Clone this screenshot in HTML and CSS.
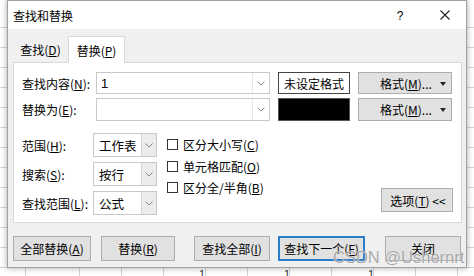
FILE: index.html
```html
<!DOCTYPE html>
<html lang="zh-CN">
<head>
<meta charset="utf-8">
<title>查找和替换</title>
<link rel="stylesheet" href="styles.css">
</head>
<body>
<div class="desk">
  <span class="cell-num n1">1</span>
  <span class="cell-num n2">1</span>
  <span class="cell-num n3">1</span>
  <div class="dialog">
    <div class="titlebar">
      <span class="title">查找和替换</span>
      <span class="tb-btn help">?</span>
      <span class="tb-btn close"><svg width="10" height="10" viewBox="0 0 10 10"><path d="M0.5 0.5 L9.5 9.5 M9.5 0.5 L0.5 9.5" stroke="#222" stroke-width="1.1" fill="none"/></svg></span>
    </div>
    <div class="tabs">
      <div class="tab t1">查找(<u>D</u>)</div>
      <div class="tab t2 active">替换(<u>P</u>)</div>
    </div>
    <div class="panel">
      <div class="row">
        <span class="lbl">查找内容(<u>N</u>):</span>
        <div class="combo wide"><span class="val">1</span><span class="drop"><svg width="8" height="5" viewBox="0 0 8 5"><polyline points="0.5,0.5 4,4 7.5,0.5" stroke="#888" fill="none"/></svg></span></div>
        <div class="preview">未设定格式</div>
        <div class="btn fmt"><span>格式(<u>M</u>)...</span><svg class="caret" width="6" height="4" viewBox="0 0 6 4"><polygon points="0,0 6,0 3,4" fill="#222"/></svg></div>
      </div>
      <div class="row r2">
        <span class="lbl">替换为(<u>E</u>):</span>
        <div class="combo wide"><span class="val"></span><span class="drop"><svg width="8" height="5" viewBox="0 0 8 5"><polyline points="0.5,0.5 4,4 7.5,0.5" stroke="#888" fill="none"/></svg></span></div>
        <div class="preview black"></div>
        <div class="btn fmt"><span>格式(<u>M</u>)...</span><svg class="caret" width="6" height="4" viewBox="0 0 6 4"><polygon points="0,0 6,0 3,4" fill="#222"/></svg></div>
      </div>
      <div class="lower">
        <div class="opts">
          <div class="orow">
            <span class="lbl2">范围(<u>H</u>):</span>
            <div class="combo small"><span class="val">工作表</span><span class="drop gray"><svg width="8" height="5" viewBox="0 0 8 5"><polyline points="0.5,0.5 4,4 7.5,0.5" stroke="#888" fill="none"/></svg></span></div>
          </div>
          <div class="orow">
            <span class="lbl2">搜索(<u>S</u>):</span>
            <div class="combo small"><span class="val">按行</span><span class="drop gray"><svg width="8" height="5" viewBox="0 0 8 5"><polyline points="0.5,0.5 4,4 7.5,0.5" stroke="#888" fill="none"/></svg></span></div>
          </div>
          <div class="orow">
            <span class="lbl2">查找范围(<u>L</u>):</span>
            <div class="combo small"><span class="val">公式</span><span class="drop gray"><svg width="8" height="5" viewBox="0 0 8 5"><polyline points="0.5,0.5 4,4 7.5,0.5" stroke="#888" fill="none"/></svg></span></div>
          </div>
        </div>
        <div class="checks">
          <div class="chk"><span class="box"></span>区分大小写(<u>C</u>)</div>
          <div class="chk"><span class="box"></span>单元格匹配(<u>O</u>)</div>
          <div class="chk"><span class="box"></span>区分全/半角(<u>B</u>)</div>
        </div>
        <div class="btn options">选项(<u>T</u>) &lt;&lt;</div>
      </div>
    </div>
    <div class="actions">
      <div class="btn act a1">全部替换(<u>A</u>)</div>
      <div class="btn act a2">替换(<u>R</u>)</div>
      <div class="btn act a3">查找全部(<u>I</u>)</div>
      <div class="btn act a4 primary">查找下一个(<u>F</u>)</div>
      <div class="btn act a5">关闭</div>
    </div>
  </div>
  <div class="wm">CSDN @Ushernrt</div>
</div>
</body>
</html>
```

FILE: styles.css
```css
* { box-sizing: border-box; }
html, body { margin: 0; padding: 0; }
body {
  width: 474px;
  height: 276px;
  overflow: hidden;
  font-family: "Noto Sans CJK SC", "Noto Sans", sans-serif;
  font-size: 12px;
  color: #000;
}
.desk {
  position: relative;
  width: 474px;
  height: 276px;
  padding-left: 7px;
  background-color: #ffffff;
  background-image:
    repeating-linear-gradient(to bottom, transparent 0, transparent 19px, #d4d4d4 19px, #d4d4d4 20px),
    repeating-linear-gradient(to right, transparent 0, transparent 41px, #d4d4d4 41px, #d4d4d4 42px);
  background-position: 0 8px, 38px 0;
}
.cell-num {
  position: absolute;
  top: 268px;
  font-family: "Liberation Sans", sans-serif;
  font-size: 11px;
  line-height: 12px;
  color: #333;
}
.n1 { left: 199px; }
.n2 { left: 284px; }
.n3 { left: 368px; }
.dialog {
  position: relative;
  width: 460px;
  height: 268px;
  background: #f0f0f0;
  border: 1px solid #a0a0a0;
  box-shadow: 0 0 6px rgba(0, 0, 0, 0.35);
  display: flex;
  flex-direction: column;
}
.titlebar {
  height: 28px;
  background: #fff;
  display: flex;
  align-items: center;
  padding-left: 5px;
  padding-right: 6px;
}
.title { flex: 1; font-size: 12px; }
.tb-btn {
  width: 30px;
  height: 28px;
  display: flex;
  align-items: center;
  justify-content: center;
}
.help {
  font-family: "Liberation Sans", sans-serif;
  font-size: 12px;
  margin-right: 15px;
  padding-top: 1px;
}
.tabs {
  display: flex;
  padding-top: 7px;
  padding-left: 5px;
  height: 33px;
}
.tab {
  height: 26px;
  display: flex;
  align-items: center;
  justify-content: center;
  padding-top: 1px;
}
.t1 { width: 55px; }
.t2 { width: 57px; }
.tab.active {
  background: #fff;
  border: 1px solid #d9d9d9;
  border-bottom: none;
  height: 27px;
  position: relative;
  z-index: 1;
}
.panel {
  margin: 0 4px 0 5px;
  height: 161px;
  background: #fff;
  border: 1px solid #d9d9d9;
  padding: 9px 8px 0 8px;
}
.row {
  display: flex;
  align-items: center;
  height: 22px;
}
.row.r2 { margin-top: 4px; height: 23px; }
.lbl { width: 74px; }
.combo {
  display: flex;
  align-items: stretch;
  height: 100%;
  border: 1px solid #c9c9c9;
  background: #fff;
}
.combo.wide { width: 174px; margin-right: 8px; }
.combo .val {
  flex: 1;
  display: flex;
  align-items: center;
  padding-left: 4px;
}
.combo.wide .val { font-family: "Liberation Sans", sans-serif; font-size: 13px; }
.drop {
  width: 17px;
  display: flex;
  align-items: center;
  justify-content: center;
  border-left: 1px solid #e6e6e6;
}
.drop.gray {
  width: 15px;
  background: #ececec;
  border-left: 1px solid #d6d6d6;
}
.preview {
  width: 72px;
  height: 100%;
  margin-right: 8px;
  border: 1px solid #444;
  background: #fff;
  display: flex;
  align-items: center;
  justify-content: center;
}
.preview.black { background: #000; border-color: #555; }
.btn {
  background: #e1e1e1;
  border: 1px solid #adadad;
  display: flex;
  align-items: center;
  justify-content: center;
}
.fmt {
  width: 94px;
  height: 100%;
  position: relative;
  justify-content: flex-start;
  padding-left: 21px;
}
.caret { position: absolute; right: 5px; top: 9px; }
.lower {
  display: flex;
  margin-top: 12px;
}
.opts {
  width: 135px;
  display: flex;
  flex-direction: column;
  gap: 5px;
}
.orow {
  display: flex;
  align-items: center;
  height: 24px;
}
.lbl2 { width: 71px; }
.combo.small { width: 64px; }
.combo.small .val { padding-left: 5px; font-size: 12.5px; }
.checks {
  flex: 1;
  margin-left: 10px;
  padding-top: 1px;
  display: flex;
  flex-direction: column;
}
.chk {
  height: 21.5px;
  display: flex;
  align-items: center;
}
.box {
  width: 11px;
  height: 11px;
  border: 1px solid #333;
  background: #fff;
  margin-right: 5px;
}
.options {
  width: 72px;
  height: 24px;
  align-self: flex-end;
  margin-bottom: 3px;
  padding-left: 2px;
}
.actions {
  display: flex;
  margin-top: 13px;
  padding-left: 5px;
  height: 25px;
}
.act { height: 25px; }
.a1 { width: 78px; }
.a2 { width: 74px; margin-left: 10px; }
.a3 { width: 76px; margin-left: 19px; }
.a4 { width: 87px; margin-left: 8px; }
.a5 { width: 76px; margin-left: 20px; }
.primary { border: 2px solid #2a7dc9; }
.wm {
  position: absolute;
  left: 333px;
  top: 248px;
  font-family: "Liberation Sans", sans-serif;
  font-size: 16.5px;
  color: rgba(150, 150, 150, 0.85);
  text-shadow: 0 0 1px #fff;
  white-space: nowrap;
}
```
